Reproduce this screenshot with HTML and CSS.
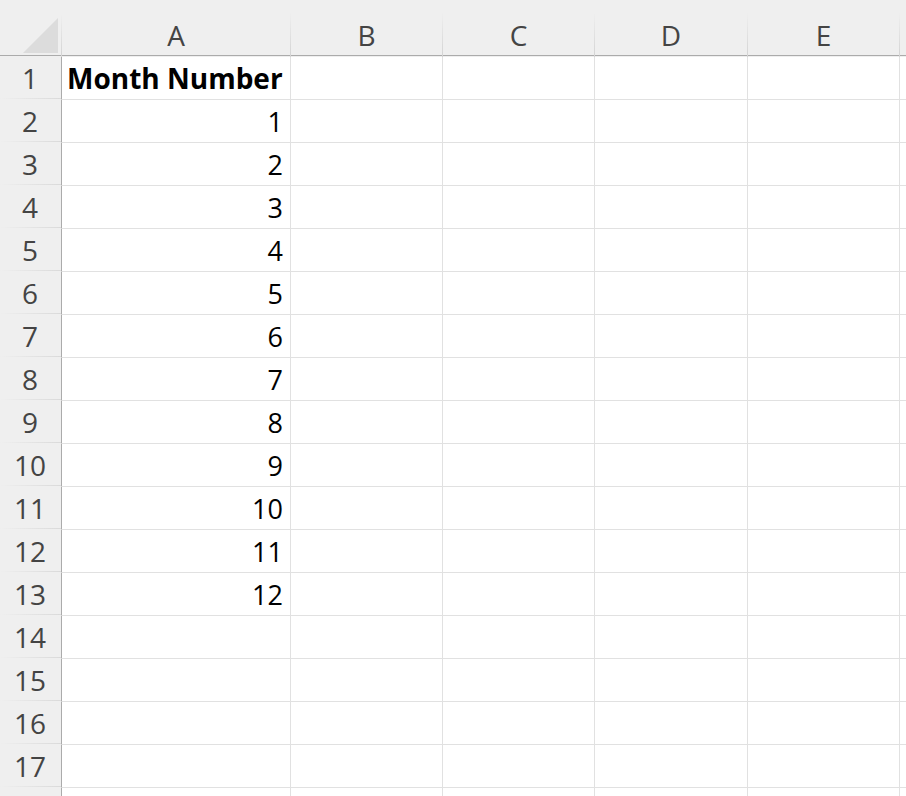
FILE: index.html
```html
<!DOCTYPE html>
<html lang="en">
<head>
<meta charset="utf-8">
<title>Sheet1</title>
<link rel="stylesheet" href="styles.css">
</head>
<body>
<div class="sheet">
  <div class="corner">
    <svg class="corner-mark" width="61" height="56" viewBox="0 0 61 56"><polygon points="23,53 58,53 58,18" fill="#dcdcdc"/></svg>
  </div>
  <div class="col-head">A</div>
  <div class="col-head">B</div>
  <div class="col-head">C</div>
  <div class="col-head">D</div>
  <div class="col-head">E</div>
  <div class="col-head last"></div>

  <div class="row-head">1</div><div class="cell head-text">Month Number</div><div class="cell"></div><div class="cell"></div><div class="cell"></div><div class="cell"></div><div class="cell last"></div>
  <div class="row-head">2</div><div class="cell num">1</div><div class="cell"></div><div class="cell"></div><div class="cell"></div><div class="cell"></div><div class="cell last"></div>
  <div class="row-head">3</div><div class="cell num">2</div><div class="cell"></div><div class="cell"></div><div class="cell"></div><div class="cell"></div><div class="cell last"></div>
  <div class="row-head">4</div><div class="cell num">3</div><div class="cell"></div><div class="cell"></div><div class="cell"></div><div class="cell"></div><div class="cell last"></div>
  <div class="row-head">5</div><div class="cell num">4</div><div class="cell"></div><div class="cell"></div><div class="cell"></div><div class="cell"></div><div class="cell last"></div>
  <div class="row-head">6</div><div class="cell num">5</div><div class="cell"></div><div class="cell"></div><div class="cell"></div><div class="cell"></div><div class="cell last"></div>
  <div class="row-head">7</div><div class="cell num">6</div><div class="cell"></div><div class="cell"></div><div class="cell"></div><div class="cell"></div><div class="cell last"></div>
  <div class="row-head">8</div><div class="cell num">7</div><div class="cell"></div><div class="cell"></div><div class="cell"></div><div class="cell"></div><div class="cell last"></div>
  <div class="row-head">9</div><div class="cell num">8</div><div class="cell"></div><div class="cell"></div><div class="cell"></div><div class="cell"></div><div class="cell last"></div>
  <div class="row-head">10</div><div class="cell num">9</div><div class="cell"></div><div class="cell"></div><div class="cell"></div><div class="cell"></div><div class="cell last"></div>
  <div class="row-head">11</div><div class="cell num">10</div><div class="cell"></div><div class="cell"></div><div class="cell"></div><div class="cell"></div><div class="cell last"></div>
  <div class="row-head">12</div><div class="cell num">11</div><div class="cell"></div><div class="cell"></div><div class="cell"></div><div class="cell"></div><div class="cell last"></div>
  <div class="row-head">13</div><div class="cell num">12</div><div class="cell"></div><div class="cell"></div><div class="cell"></div><div class="cell"></div><div class="cell last"></div>
  <div class="row-head">14</div><div class="cell"></div><div class="cell"></div><div class="cell"></div><div class="cell"></div><div class="cell"></div><div class="cell last"></div>
  <div class="row-head">15</div><div class="cell"></div><div class="cell"></div><div class="cell"></div><div class="cell"></div><div class="cell"></div><div class="cell last"></div>
  <div class="row-head">16</div><div class="cell"></div><div class="cell"></div><div class="cell"></div><div class="cell"></div><div class="cell"></div><div class="cell last"></div>
  <div class="row-head">17</div><div class="cell"></div><div class="cell"></div><div class="cell"></div><div class="cell"></div><div class="cell"></div><div class="cell last"></div>
  <div class="row-head"></div><div class="cell"></div><div class="cell"></div><div class="cell"></div><div class="cell"></div><div class="cell"></div><div class="cell last"></div>
</div>
</body>
</html>
```

FILE: styles.css
```css
html, body {
  margin: 0;
  padding: 0;
  background: #ffffff;
  overflow: hidden;
}

.sheet {
  display: grid;
  grid-template-columns: 62px 229px 152px 152px 153px 152px 30px;
  grid-template-rows: 57px repeat(18, 43px);
  width: 930px;
  font-family: "Open Sans", "Noto Sans", sans-serif;
}

/* top-left select-all box */
.corner {
  box-sizing: border-box;
  background: #efefef;
  border-bottom: 1px solid #ababab;
  border-right: 1px solid transparent;
  border-image: linear-gradient(to bottom, #efefef 0%, #efefef 24%, #d3d3d3 100%) 0 1 0 0;
  border-image-width: 0 1px 0 0;
  box-shadow: inset 0 -1px 0 #ababab;
}

.corner-mark {
  display: block;
}

/* column letters */
.col-head {
  box-sizing: border-box;
  background: #efefef;
  border-bottom: 1px solid #ababab;
  border-right: 1px solid transparent;
  border-image: linear-gradient(to bottom, #efefef 0%, #efefef 22%, #d3d3d3 100%) 0 1 0 0;
  border-image-width: 0 1px 0 0;
  box-shadow: inset 0 -1px 0 #ababab;
  color: #444444;
  font-size: 28px;
  font-weight: 400;
  display: flex;
  align-items: flex-end;
  justify-content: center;
  padding-bottom: 7px;
  line-height: 1;
}

/* row numbers */
.row-head {
  box-sizing: border-box;
  background: #efefef;
  border-right: 1px solid #ababab;
  border-bottom: 1px solid transparent;
  background-image: linear-gradient(to right, #efefef 0%, #dadada 100%);
  background-size: 100% 1px;
  background-position: left bottom;
  background-repeat: no-repeat;
  color: #444444;
  font-size: 28px;
  display: flex;
  align-items: flex-end;
  justify-content: center;
  padding-bottom: 7px;
  line-height: 1;
  padding-right: 1px;
}

.cell {
  box-sizing: border-box;
  border-right: 1px solid #e1e1e1;
  border-bottom: 1px solid #e1e1e1;
  color: #000000;
  font-size: 27px;
  display: flex;
  align-items: flex-end;
  padding: 0 7px 7px 6px;
  line-height: 1;
}

.cell.num {
  justify-content: flex-end;
}

.cell.head-text {
  font-size: 28px;
  font-weight: 700;
  padding-left: 5px;
}

.last {
  border-right: none;
}
```
